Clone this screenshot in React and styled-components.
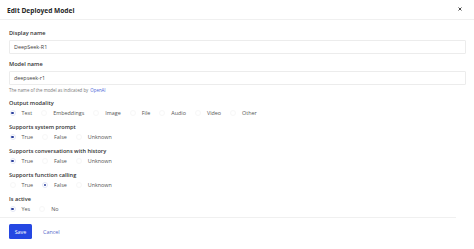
import React from "react";
import styled, { createGlobalStyle } from "styled-components";

const Global = createGlobalStyle`
  html, body { margin: 0; padding: 0; background: #fff; }
  body { font-family: "Open Sans", "Liberation Sans", sans-serif; color: #333; }
`;

const Dialog = styled.div`
  width: 474px;
  height: 249px;
  background: #fff;
  display: flex;
  flex-direction: column;
`;

const Header = styled.div`
  height: 20px;
  box-sizing: border-box;
  display: flex;
  align-items: center;
  justify-content: space-between;
  padding: 1px 7px 0 7px;
  border-bottom: 1px solid #f0f0f0;
`;

const Title = styled.h1`
  margin: 0;
  font-size: 6.6px;
  font-weight: 700;
  color: #262626;
`;

const Close = styled.button`
  border: none;
  background: transparent;
  padding: 0;
  width: 8px;
  height: 8px;
  display: flex;
  align-items: center;
  justify-content: center;
  margin-right: 3px;
  margin-top: -3px;
`;

const Body = styled.div`
  padding: 7px 9px 0 9px;
  display: flex;
  flex-direction: column;
`;

const Label = styled.div`
  font-size: 5.6px;
  font-weight: 600;
  color: #333;
  line-height: 8px;
  margin-top: ${(p) => p.$mt || 0}px;
`;

const Input = styled.div`
  margin-top: 3px;
  width: 457px;
  height: 14px;
  box-sizing: border-box;
  border: 1px solid #ececec;
  border-radius: 1px;
  font-size: 5.4px;
  color: #444;
  padding-left: 4px;
  display: flex;
  align-items: center;
`;

const Help = styled.div`
  margin-top: 2px;
  font-size: 4.4px;
  color: #777;
  line-height: 7px;
`;

const Link = styled.span`
  color: #4a63d8;
  margin-left: 2px;
`;

const RadioRow = styled.div`
  display: flex;
  align-items: center;
  height: 10px;
  margin-top: 1px;
  padding-left: 0.5px;
`;

const Option = styled.label`
  display: flex;
  align-items: center;
  font-size: 5.4px;
  color: #555;
  margin-right: 9px;
`;

const Circle = styled.span`
  width: 6px;
  height: 6px;
  border-radius: 50%;
  box-sizing: border-box;
  border: 0.7px solid ${(p) => (p.$on ? "#e4e8f6" : "#f7f7f7")};
  display: flex;
  align-items: center;
  justify-content: center;
  margin-right: 6px;
  &::after {
    content: "";
    width: 2.6px;
    height: 2.6px;
    border-radius: 50%;
    background: ${(p) => (p.$on ? "#2a3f9c" : "transparent")};
  }
`;

const Divider = styled.div`
  width: 456px;
  margin-left: -9px;
  margin-top: 3px;
  border-top: 1px solid #f0f0f0;
`;

const Footer = styled.div`
  display: flex;
  align-items: center;
  padding: 6px 9px;
  gap: 5px;
`;

const Save = styled.button`
  width: 23px;
  height: 15px;
  border: none;
  border-radius: 1.5px;
  background: #2547e2;
  color: #fff;
  font-family: inherit;
  font-size: 5.4px;
  padding: 0;
`;

const Cancel = styled.button`
  border: none;
  background: transparent;
  color: #5668c9;
  font-family: inherit;
  font-size: 5.4px;
  height: 15px;
  padding: 0 6px;
`;

function Radios({ options, value }) {
  return (
    <RadioRow>
      {options.map((o) => (
        <Option key={o}>
          <Circle $on={o === value} />
          {o}
        </Option>
      ))}
    </RadioRow>
  );
}

export default function App() {
  const tri = ["True", "False", "Unknown"];
  return (
    <Dialog>
      <Global />
      <Header>
        <Title>Edit Deployed Model</Title>
        <Close aria-label="close">
          <svg width="4" height="4" viewBox="0 0 4 4">
            <path d="M0.5 0.5L3.5 3.5M3.5 0.5L0.5 3.5" stroke="#333" strokeWidth="0.9" />
          </svg>
        </Close>
      </Header>
      <Body>
        <Label $mt={2}>Display name</Label>
        <Input>DeepSeek-R1</Input>
        <Label $mt={6}>Model name</Label>
        <Input>deepseek-r1</Input>
        <Help>
          The name of the model as indicated by<Link>OpenAI</Link>
        </Help>
        <Label $mt={5}>Output modality</Label>
        <Radios
          options={["Text", "Embeddings", "Image", "File", "Audio", "Video", "Other"]}
          value="Text"
        />
        <Label $mt={5}>Supports system prompt</Label>
        <Radios options={tri} value="True" />
        <Label $mt={5}>Supports conversations with history</Label>
        <Radios options={tri} value="True" />
        <Label $mt={5}>Supports function calling</Label>
        <Radios options={tri} value="False" />
        <Label $mt={5}>Is active</Label>
        <Radios options={["Yes", "No"]} value="Yes" />
        <Divider />
      </Body>
      <Footer>
        <Save>Save</Save>
        <Cancel>Cancel</Cancel>
      </Footer>
    </Dialog>
  );
}
